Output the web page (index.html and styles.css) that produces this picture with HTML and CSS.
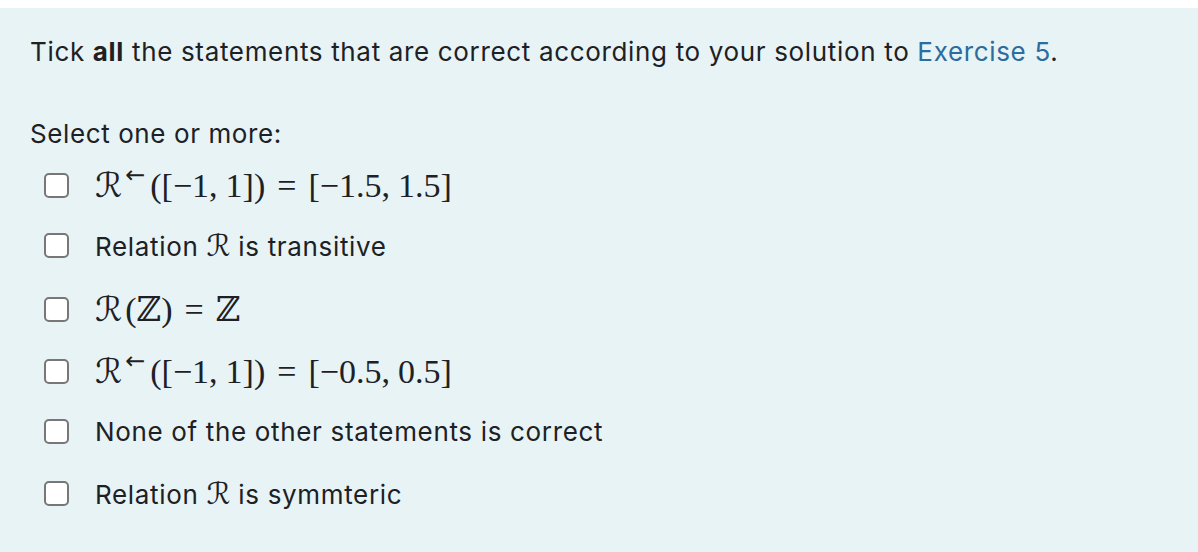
FILE: index.html
```html
<!DOCTYPE html>
<html>
<head>
<meta charset="utf-8">
<link rel="stylesheet" href="styles.css">
</head>
<body>
<div class="formulation">
  <p class="qtext">Tick <b>all</b> the statements that are correct according to your solution to <a href="#" class="link">Exercise 5</a>.</p>
  <div class="prompt">Select one or more:</div>
  <div class="answers">
    <div class="row"><span class="box"></span><span class="math"><span class="cal">ℛ</span><sup class="arr">←</sup>([−1,<span class="th"></span>1])<span class="eq">=</span>[−1.5,<span class="th"></span>1.5]</span></div>
    <div class="row row-text"><span class="box"></span><span class="label">Relation <span class="cal cal-in">ℛ</span> is transitive</span></div>
    <div class="row"><span class="box"></span><span class="math"><span class="cal">ℛ</span>(ℤ)<span class="eq">=</span>ℤ</span></div>
    <div class="row"><span class="box"></span><span class="math"><span class="cal">ℛ</span><sup class="arr">←</sup>([−1,<span class="th"></span>1])<span class="eq">=</span>[−0.5,<span class="th"></span>0.5]</span></div>
    <div class="row row-text"><span class="box"></span><span class="label">None of the other statements is correct</span></div>
    <div class="row row-text"><span class="box"></span><span class="label">Relation <span class="cal cal-in">ℛ</span> is symmteric</span></div>
  </div>
</div>
</body>
</html>
```
FILE: styles.css
```css
html, body {
  margin: 0;
  padding: 0;
  background: #ffffff;
}
body {
  padding-top: 8px;
  font-family: Inter, "Liberation Sans", sans-serif;
  color: #1d2125;
}
.formulation {
  background: #e7f3f5;
  height: 560px;
  padding: 26px 0 0 30px;
  box-sizing: border-box;
}
.qtext {
  margin: 0;
  font-size: 26px;
  line-height: 36px;
  letter-spacing: 0.66px;
}
.qtext b {
  font-weight: 700;
}
.link {
  color: #2c6c9e;
  text-decoration: none;
}
.prompt {
  margin-top: 46px;
  font-size: 26px;
  line-height: 36px;
  letter-spacing: 0.6px;
}
.answers {
  display: flex;
  flex-direction: column;
  margin-top: 2px;
}
.row {
  display: flex;
  align-items: center;
  height: 62px;
  box-sizing: border-box;
  padding-left: 14px;
}
.row-text {
  padding-bottom: 4px;
}
.box {
  width: 25px;
  height: 25px;
  box-sizing: border-box;
  border: 2px solid #777777;
  border-radius: 5px;
  background: #ffffff;
  margin-right: 26px;
  flex: none;
}
.label {
  font-size: 26px;
  letter-spacing: 0.66px;
}
.math {
  font-family: "Liberation Serif", "DejaVu Serif", serif;
  font-size: 34px;
  white-space: nowrap;
}
.th {
  display: inline-block;
  width: 8px;
}
.eq {
  margin: 0 12px;
}
.cal {
  font-family: "DejaVu Serif", "DejaVu Sans", serif;
  font-style: italic;
  font-size: 34px;
  margin-right: 3px;
}
.cal-in {
  font-size: 30px;
  letter-spacing: 0;
  margin-right: 0;
}
.arr {
  font-family: "DejaVu Sans", sans-serif;
  font-size: 24px;
  vertical-align: 14px;
  line-height: 0;
  margin-right: 5px;
}
```
